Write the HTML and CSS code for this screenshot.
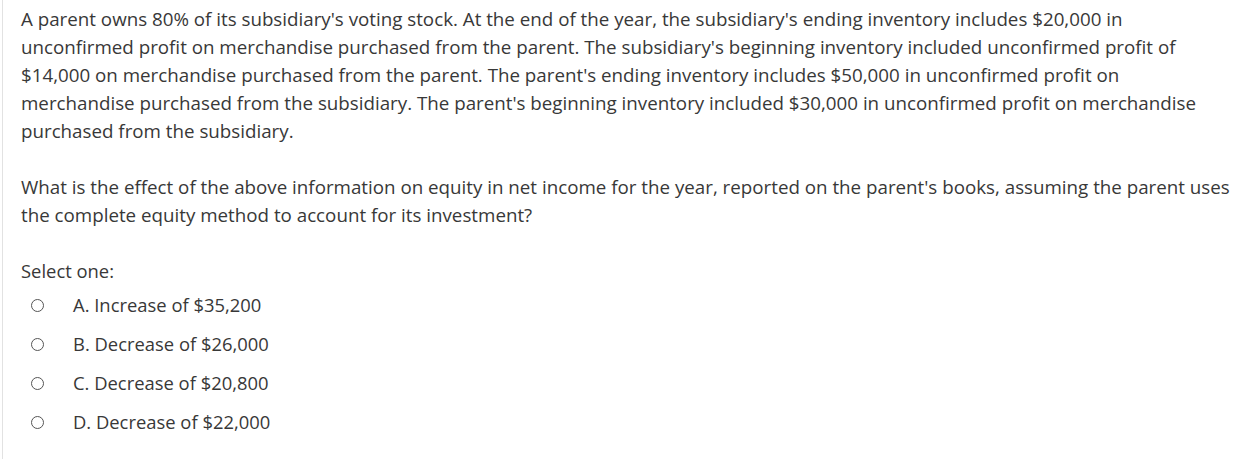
FILE: index.html
```html
<!DOCTYPE html>
<html>
<head>
<meta charset="utf-8">
<link rel="stylesheet" href="styles.css">
</head>
<body>
<div class="panel">
  <div class="qtext">
    <p class="para-main">A parent owns 80% of its subsidiary's voting stock. At the end of the year, the subsidiary's ending inventory includes $20,000 in unconfirmed profit on merchandise purchased from the parent. The subsidiary's beginning inventory included unconfirmed profit of $14,000 on merchandise purchased from the parent. The parent's ending inventory includes $50,000 in unconfirmed profit on merchandise purchased from the subsidiary. The parent's beginning inventory included $30,000 in unconfirmed profit on merchandise purchased from the subsidiary.</p>
    <p class="para-q">What is the effect of the above information on equity in net income for the year, reported on the parent's books, assuming the parent uses the complete equity method to account for its investment?</p>
  </div>
  <div class="prompt">Select one:</div>
  <div class="answers">
    <label class="opt"><span class="radio"></span><span class="lbl">A. Increase of $35,200</span></label>
    <label class="opt"><span class="radio"></span><span class="lbl">B. Decrease of $26,000</span></label>
    <label class="opt"><span class="radio"></span><span class="lbl">C. Decrease of $20,800</span></label>
    <label class="opt"><span class="radio"></span><span class="lbl">D. Decrease of $22,000</span></label>
  </div>
</div>
</body>
</html>
```
FILE: styles.css
```css
html, body {
  margin: 0;
  padding: 0;
  background: #ffffff;
}
body {
  font-family: "Open Sans", "Liberation Sans", sans-serif;
  font-size: 18.4px;
  color: #383838;
}
.panel {
  margin-left: 2px;
  border-left: 1px solid #e2e2e2;
  padding: 5px 0 30px 18px;
  min-height: 424px;
}
.qtext p {
  margin: 0 0 28px 0;
  line-height: 28px;
  font-size: 18.75px;
}
.qtext .para-main {
  max-width: 1190px;
}
.qtext .para-q {
  max-width: 1220px;
}
.prompt {
  line-height: 28px;
  margin-bottom: 6px;
}
.answers {
  display: flex;
  flex-direction: column;
  gap: 11px;
}
.opt {
  display: flex;
  align-items: center;
  height: 28px;
}
.radio {
  width: 13px;
  height: 13px;
  border: 1px solid #555;
  border-radius: 50%;
  margin-left: 10px;
  margin-right: 29px;
  box-sizing: border-box;
}
.lbl {
  line-height: 28px;
}
```
